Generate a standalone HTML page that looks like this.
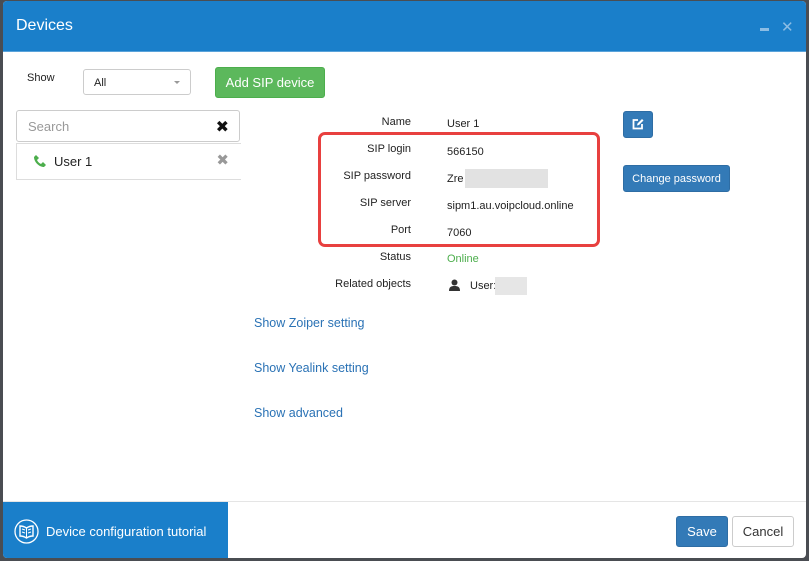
<!DOCTYPE html>
<html><head><style>
*{margin:0;padding:0;box-sizing:border-box}
body{width:809px;height:561px;background:#4a4d52;position:relative;overflow:hidden;font-family:"Liberation Sans","DejaVu Sans",sans-serif;color:#222}
.a{position:absolute}
#modal{left:3px;top:1px;width:803px;height:557px;background:#fff;border-radius:4px;overflow:hidden}
#hdr{left:0;top:0;width:803px;height:51px;background:#1a7fca;border-bottom:1px solid #5aa3da}
.lbl{font-size:11px;text-align:right;width:160px;left:248px}
.val{font-size:11px;left:444px}
.lnk{font-size:12.5px;color:#2a72b5;left:251px}
.btn{border-radius:3px;font-size:12px;text-align:center}
</style></head><body>
<div id="modal" class="a">
 <div id="hdr" class="a">
  <div class="a" style="left:13px;top:16px;color:#fff;font-size:16px">Devices</div>
  <div class="a" style="left:757px;top:27px;width:9px;height:3px;background:#8cbde4"></div>
  <div class="a" style="left:778px;top:17px;color:#8cbde4;font-size:15px;font-weight:bold">✕</div>
 </div>
 <div class="a" style="left:24px;top:71px;font-size:11px">Show</div>
 <div class="a" style="left:80px;top:68px;width:108px;height:26px;border:1px solid #ccc;border-radius:3px;font-size:11px;padding:7px 10px">All<span class="a" style="right:10px;top:11px;border:3px solid transparent;border-top:3px solid #999"></span></div>
 <div class="a btn" style="left:212px;top:66px;width:110px;height:31px;background:#5cb85c;border:1px solid #4cae4c;color:#fff;font-size:13px;line-height:29px">Add SIP device</div>
 <div class="a" style="left:13px;top:109px;width:224px;height:32px;border:1px solid #ccc;border-radius:3px;font-size:13px;color:#999;padding:8px 11px">Search<span class="a" style="right:10px;top:6px;color:#111;font-size:16px;font-weight:bold">✖</span></div>
 <div class="a" style="left:13px;top:142px;width:225px;height:37px;border:1px solid #ddd;border-right:none;font-size:13px;padding:10px 0 0 37px">User 1
  <svg class="a" style="left:16px;top:10px" width="14" height="14" viewBox="0 0 14 14"><path d="M3 1l3 3-2 2c1 2 2 3 4 4l2-2 3 3-2 2C6 13 1 8 1 3z" fill="#4cae4c"/></svg>
  <span class="a" style="right:12px;top:7px;color:#999;font-size:15px;font-weight:bold">✖</span></div>
 <div class="a lbl" style="top:115px">Name</div><div class="a val" style="top:117px">User 1</div>
 <div class="a lbl" style="top:142px">SIP login</div><div class="a val" style="top:145px">566150</div>
 <div class="a lbl" style="top:169px">SIP password</div><div class="a val" style="top:172px">Zre</div>
 <div class="a" style="left:462px;top:168px;width:83px;height:19px;background:#e2e2e2"></div>
 <div class="a lbl" style="top:196px">SIP server</div><div class="a val" style="top:199px">sipm1.au.voipcloud.online</div>
 <div class="a lbl" style="top:223px">Port</div><div class="a val" style="top:226px">7060</div>
 <div class="a lbl" style="top:250px">Status</div><div class="a val" style="top:252px;color:#4cae4c">Online</div>
 <div class="a lbl" style="top:277px">Related objects</div>
 <svg class="a" style="left:446px;top:278px" width="11" height="12" viewBox="0 0 11 12"><circle cx="5.5" cy="3.5" r="3" fill="#333"/><path d="M0 12c0-4 2-5 5.5-5S11 8 11 12z" fill="#333"/></svg>
 <div class="a val" style="top:279px;left:467px">User:</div>
 <div class="a" style="left:492px;top:276px;width:32px;height:18px;background:#e6e6e6"></div>
 <div class="a" style="left:315px;top:131px;width:282px;height:115px;border:3px solid #e8403f;border-radius:7px"></div>
 <div class="a btn" style="left:620px;top:110px;width:30px;height:27px;background:#337ab7;border:1px solid #2e6da4"></div>
 <svg class="a" style="left:629px;top:117px" width="12" height="12" viewBox="0 0 12 12"><path d="M6 2H1.5v8.5H10V6" fill="none" stroke="#fff" stroke-width="1.8"/><path d="M5 7.5l0.5-2L10 1l1.5 1.5L7 7z" fill="#fff"/></svg>
 <div class="a btn" style="left:620px;top:164px;width:107px;height:27px;background:#337ab7;border:1px solid #2e6da4;color:#fff;font-size:11px;line-height:27px">Change password</div>
 <div class="a lnk" style="top:315px">Show Zoiper setting</div>
 <div class="a lnk" style="top:360px">Show Yealink setting</div>
 <div class="a lnk" style="top:405px">Show advanced</div>
 <div class="a" style="left:0;top:500px;width:803px;height:1px;background:#e5e5e5"></div>
 <div class="a" style="left:0;top:501px;width:225px;height:56px;background:#1a7fca;color:#fff;font-size:13px;padding:22px 0 0 43px">Device configuration tutorial
  <svg class="a" style="left:11px;top:17px" width="25" height="25" viewBox="0 0 25 25"><circle cx="12.5" cy="12.5" r="11.5" fill="none" stroke="#fff" stroke-width="1.3"/><path d="M6 7c3 0 5 1 6.5 2 1.5-1 3.5-2 6.5-2v10c-3 0-5 1-6.5 2-1.5-1-3.5-2-6.5-2z" fill="none" stroke="#fff" stroke-width="1.4"/><path d="M12.5 9v10M8 10l3 1M8 13l3 1M14 11l3-1M14 14l3-1" stroke="#fff" stroke-width="1"/></svg>
 </div>
 <div class="a btn" style="left:673px;top:515px;width:52px;height:31px;background:#337ab7;border:1px solid #2e6da4;color:#fff;line-height:29px;font-size:13px">Save</div>
 <div class="a btn" style="left:729px;top:515px;width:62px;height:31px;background:#fff;border:1px solid #ccc;color:#333;line-height:29px;font-size:13px">Cancel</div>
</div>
</body></html>
